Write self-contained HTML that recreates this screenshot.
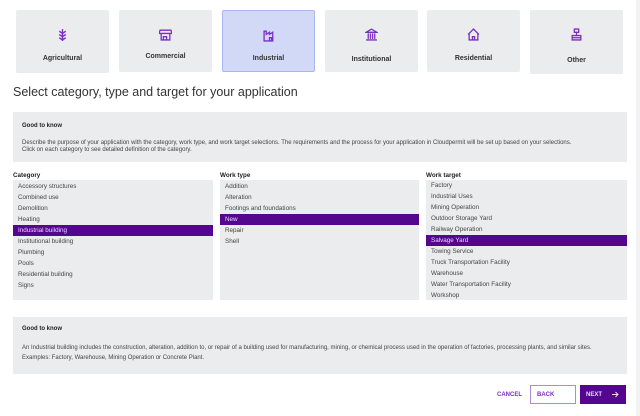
<!DOCTYPE html>
<html><head><style>
*{margin:0;padding:0;box-sizing:border-box}
body{width:640px;height:416px;background:#fff;font-family:"Liberation Sans",sans-serif;color:#2b2f38;position:relative;overflow:hidden}
.t{position:absolute;top:10px;width:93px;height:62px;background:#ebecee;border-radius:2px;text-align:center;font-size:7px;font-weight:bold;color:#333}
.t svg{position:absolute;left:40px;top:18px}
.t span{position:absolute;left:0;right:0;top:44px}
.sel{background:#d2d9f7;border:1px solid #a9b6f0}
h1{position:absolute;left:13px;top:85px;font-size:12.5px;font-weight:normal;color:#333}
.box{position:absolute;left:13px;width:614px;background:#ebecee;font-size:6px;color:#444;padding:0 9px}
.box b{display:block;color:#222}
.lab{position:absolute;top:172px;font-size:6.3px;font-weight:bold;color:#222}
.list{position:absolute;top:180px;height:120px;background:#ebecee;font-size:6.3px;color:#444;padding-top:1px}
.list div{height:11px;line-height:12px;padding-left:5px}
.list .on{background:#54068f;color:#e8dcf5}
.btn{position:absolute;top:385px;height:19px;font-size:6px;font-weight:bold;line-height:20px;padding-left:6px}
</style></head><body>
<div class="t" style="left:16px;height:63px"><svg width="13" height="13" viewBox="0 0 12 12" fill="none" stroke="#7b2fc2" stroke-width="1.3"><path d="M6 1v11M3 3l3 2 3-2M3 6l3 2 3-2M3 9l3 2 3-2"/></svg><span style="top:45px">Agricultural</span></div>
<div class="t" style="left:119px"><svg width="13" height="13" viewBox="0 0 12 12" fill="none" stroke="#7b2fc2" stroke-width="1.2"><path d="M1 2h10l1 3H0zM2 5v6h8V5M4 11V8h3v3"/></svg><span style="top:43px">Commercial</span></div>
<div class="t sel" style="left:222px"><svg width="13" height="13" viewBox="0 0 12 12" fill="none" stroke="#7b2fc2" stroke-width="1.2"><path d="M1 11V2h2v3l3-2v2l3-2v8zM6 11V8h2v3"/></svg><span style="top:44px">Industrial</span></div>
<div class="t" style="left:325px"><svg width="13" height="13" viewBox="0 0 12 12" fill="none" stroke="#7b2fc2" stroke-width="1.2"><path d="M1 4L6 1l5 3zM3 5v5M5 5v5M7 5v5M9 5v5M1 11h10"/></svg><span style="top:46px">Institutional</span></div>
<div class="t" style="left:427px"><svg width="13" height="13" viewBox="0 0 12 12" fill="none" stroke="#7b2fc2" stroke-width="1.2"><path d="M1 6l5-5 5 5M2 5v6h8V5M5 11V8h2v3"/></svg><span style="top:45px">Residential</span></div>
<div class="t" style="left:530px;height:64px"><svg width="13" height="13" viewBox="0 0 12 12" fill="none" stroke="#7b2fc2" stroke-width="1.2"><path d="M4 1h4v3H4zM6 4v3M2 7h8v4H2zM2 9h8"/></svg><span style="top:47px">Other</span></div>
<h1>Select category, type and target for your application</h1>
<div class="box" style="top:112px;height:50px;padding-top:11px"><b>Good to know</b><div style="margin-top:11px;line-height:7px">Describe the purpose of your application with the category, work type, and work target selections. The requirements and the process for your application in Cloudpermit will be set up based on your selections.<br>Click on each category to see detailed definition of the category.</div></div>
<div class="lab" style="left:13px">Category</div>
<div class="lab" style="left:220px">Work type</div>
<div class="lab" style="left:426px">Work target</div>
<div class="list" style="left:13px;width:200px"><div>Accessory structures</div><div>Combined use</div><div>Demolition</div><div>Heating</div><div class="on">Industrial building</div><div>Institutional building</div><div>Plumbing</div><div>Pools</div><div>Residential building</div><div>Signs</div></div>
<div class="list" style="left:220px;width:199px"><div>Addition</div><div>Alteration</div><div>Footings and foundations</div><div class="on">New</div><div>Repair</div><div>Shell</div></div>
<div class="list" style="left:426px;width:201px;padding-top:0"><div>Factory</div><div>Industrial Uses</div><div>Mining Operation</div><div>Outdoor Storage Yard</div><div>Railway Operation</div><div class="on">Salvage Yard</div><div>Towing Service</div><div>Truck Transportation Facility</div><div>Warehouse</div><div>Water Transportation Facility</div><div>Workshop</div></div>
<div class="box" style="top:317px;height:57px;padding-top:9px"><b>Good to know</b><div style="margin-top:11px;line-height:10px">An Industrial building includes the construction, alteration, addition to, or repair of a building used for manufacturing, mining, or chemical process used in the operation of factories, processing plants, and similar sites.<br>Examples: Factory, Warehouse, Mining Operation or Concrete Plant.</div></div>
<div class="btn" style="left:491px;color:#7b2fc2">CANCEL</div>
<div class="btn" style="left:530px;width:46px;border:1px solid #b08ad8;color:#7b2fc2;line-height:18px">BACK</div>
<div class="btn" style="left:580px;width:46px;background:#54068f;color:#e8dcf5">NEXT<svg style="position:absolute;left:32px;top:6px" width="7" height="7" viewBox="0 0 7 7" fill="none" stroke="#e8dcf5" stroke-width="1"><path d="M0 3.5h6M3.5 1l2.5 2.5L3.5 6"/></svg></div>
<div style="position:absolute;left:636px;top:0;width:4px;height:416px;background:#f3f3f5"></div>
</body></html>
